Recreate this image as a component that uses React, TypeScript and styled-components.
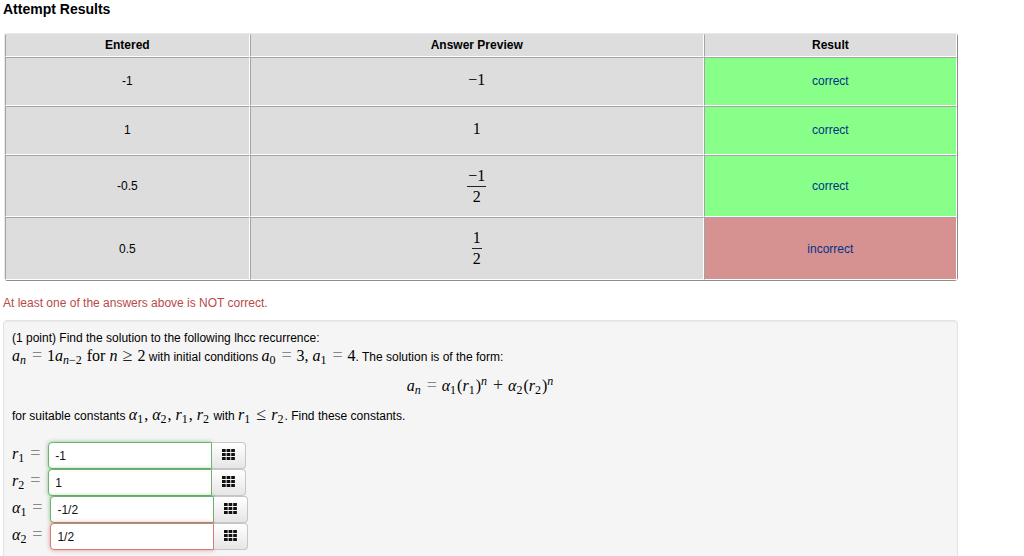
import React from 'react';
import styled, { createGlobalStyle } from 'styled-components';

const GlobalStyle = createGlobalStyle`
  * { box-sizing: border-box; }
  body {
    margin: 0;
    background: #fff;
    color: #000;
    font-family: "Liberation Sans", Arial, sans-serif;
    font-size: 12px;
    line-height: 18px;
  }
`;

const Page = styled.main`
  margin: 0 66px 0 3px;
`;

const Heading = styled.h3`
  margin: 0 0 15px;
  font-size: 14px;
  line-height: 18px;
`;

const ResultsTable = styled.table`
  width: calc(100% - 1px);
  margin-left: 1px;
  table-layout: fixed;
  border: 1px solid;
  border-color: #e8e8e8 #8c8c8c #8c8c8c #e8e8e8;
  border-radius: 4px;
  border-collapse: separate;
  border-spacing: 0;
  background: #ddd;
  text-align: center;
`;

const Col = styled.col<{ $share: number }>`
  width: ${(p) => p.$share}%;
`;

const cellEdges = `
  padding: 0 0 2px;
  border: 1px solid;
  border-color: #a4a4a4 #fff #fff #a4a4a4;
`;

const HeadCell = styled.th`
  ${cellEdges}
  height: 23px;
  border-top-color: #ddd;
  font-size: 12px;
`;

const Cell = styled.td<{ $tall?: boolean }>`
  ${cellEdges}
  height: ${(p) => (p.$tall ? 62 : 49)}px;
  padding-bottom: ${(p) => (p.$tall ? 0 : 2)}px;
  font-size: 12px;
  tr:last-child > & { height: 63px; }
`;

const ResultCell = styled(Cell)<{ $ok: boolean }>`
  background: ${(p) => (p.$ok ? '#8f8' : '#d69191')};
  color: #038;
`;

const Warning = styled.p`
  margin: 13px 0 8px;
  color: #b94a48;
`;

const Problem = styled.section`
  padding: 8px 8px 24px;
  border: 1px solid #e3e3e3;
  border-radius: 4px;
  background: #f5f5f5;
  box-shadow: inset 0 1px 1px rgba(0, 0, 0, 0.05);
`;

const Line = styled.p`
  margin: 0;
`;

const Display = styled.div`
  margin: 11px 0 10px;
  text-align: center;
`;

const MathText = styled.span`
  font-family: "Liberation Serif", "Times New Roman", serif;
  font-size: 16px;
  line-height: 16px;
  white-space: nowrap;
  sub, sup {
    font-size: 12px;
    line-height: 0;
    margin-right: 1px;
  }
  sub { vertical-align: -3px; }
  sup { vertical-align: 6px; }
`;

const Rel = styled.span<{ $dark?: boolean }>`
  display: inline-block;
  width: 12px;
  margin: 0 4px;
  text-align: center;
  font-size: 18px;
  line-height: 16px;
  color: ${(p) => (p.$dark ? '#222' : '#888')};
`;

const Fraction = styled.span`
  display: inline-flex;
  flex-direction: column;
  vertical-align: middle;
  line-height: 20px;
  span + span { border-top: 1px solid #222; }
  span { padding: 0 1px; }
`;

const Answers = styled.form`
  margin-top: 17px;
`;

const AnswerRow = styled.div`
  display: flex;
  align-items: center;
  height: 27px;
`;

const AnswerLabel = styled.label`
  margin: 0 3px 2px 0;
`;

const AnswerInput = styled.input<{ $ok: boolean }>`
  width: 164px;
  height: 27px;
  padding: 0 6px;
  border: 1px solid ${(p) => (p.$ok ? '#6fb172' : '#d9797a')};
  border-radius: 4px 0 0 4px;
  background: #fff;
  box-shadow: 0 0 4px ${(p) => (p.$ok ? 'rgba(70, 160, 70, 0.6)' : 'rgba(210, 80, 80, 0.6)')};
  color: #111;
  font: 12px "Liberation Sans", Arial, sans-serif;
  outline: none;
`;

const KeypadButton = styled.button`
  display: flex;
  align-items: center;
  justify-content: center;
  width: 34px;
  height: 27px;
  padding: 0 0 2px;
  border: 1px solid #c6c6c6;
  border-left: 0;
  border-radius: 0 4px 4px 0;
  background: linear-gradient(#fff, #e6e6e6);
`;

const KeypadIcon = () => (
  <svg width="13" height="11" viewBox="0 0 13 11" fill="#111" aria-hidden="true">
    {[0, 4, 8].map((y) =>
      [0, 4.6, 9.2].map((x) => <rect key={`${x}-${y}`} x={x} y={y} width="3.7" height="3" rx="0.3" />),
    )}
  </svg>
);

const Frac = ({ top, bottom }: { top: string; bottom: string }) => (
  <Fraction>
    <span>{top}</span>
    <span>{bottom}</span>
  </Fraction>
);

const results: { entered: string; preview: React.ReactNode; ok: boolean; tall?: boolean }[] = [
  { entered: '-1', preview: '−1', ok: true },
  { entered: '1', preview: '1', ok: true },
  { entered: '-0.5', preview: <Frac top="−1" bottom="2" />, ok: true, tall: true },
  { entered: '0.5', preview: <Frac top="1" bottom="2" />, ok: false, tall: true },
];

const answers = [
  { id: 'r1', name: 'r', index: 1, value: '-1', ok: true },
  { id: 'r2', name: 'r', index: 2, value: '1', ok: true },
  { id: 'alpha1', name: 'α', index: 1, value: '-1/2', ok: true },
  { id: 'alpha2', name: 'α', index: 2, value: '1/2', ok: false },
];

const Var = ({ name, index }: { name: string; index: React.ReactNode }) => (
  <>
    <i>{name}</i>
    <sub>{index}</sub>
  </>
);

export default function App() {
  return (
    <>
      <GlobalStyle />
      <Page>
        <Heading>Attempt Results</Heading>
        <ResultsTable>
          <colgroup>
            <Col $share={25.7} />
            <Col $share={47.7} />
            <Col $share={26.6} />
          </colgroup>
          <thead>
            <tr>
              <HeadCell scope="col">Entered</HeadCell>
              <HeadCell scope="col">Answer Preview</HeadCell>
              <HeadCell scope="col">Result</HeadCell>
            </tr>
          </thead>
          <tbody>
            {results.map((r) => (
              <tr key={r.entered}>
                <Cell $tall={r.tall}>{r.entered}</Cell>
                <Cell $tall={r.tall}>
                  <MathText>{r.preview}</MathText>
                </Cell>
                <ResultCell $tall={r.tall} $ok={r.ok}>
                  {r.ok ? 'correct' : 'incorrect'}
                </ResultCell>
              </tr>
            ))}
          </tbody>
        </ResultsTable>
        <Warning>At least one of the answers above is NOT correct.</Warning>
        <Problem>
          <Line>(1 point) Find the solution to the following lhcc recurrence:</Line>
          <Line>
            <MathText>
              <Var name="a" index={<i>n</i>} />
              <Rel>=</Rel>1<Var name="a" index={<><i>n</i>−2</>} /> for <i>n</i>
              <Rel $dark>≥</Rel>2
            </MathText>{' '}
            with initial conditions{' '}
            <MathText>
              <Var name="a" index="0" />
              <Rel>=</Rel>3, <Var name="a" index="1" />
              <Rel>=</Rel>4
            </MathText>
            . The solution is of the form:
          </Line>
          <Display>
            <MathText>
              <Var name="a" index={<i>n</i>} />
              <Rel>=</Rel>
              <Var name="α" index="1" />(<Var name="r" index="1" />)<sup><i>n</i></sup>
              <Rel $dark>+</Rel>
              <Var name="α" index="2" />(<Var name="r" index="2" />)<sup><i>n</i></sup>
            </MathText>
          </Display>
          <Line>
            for suitable constants{' '}
            <MathText>
              <Var name="α" index="1" />, <Var name="α" index="2" />, <Var name="r" index="1" />,{' '}
              <Var name="r" index="2" />
            </MathText>{' '}
            with{' '}
            <MathText>
              <Var name="r" index="1" />
              <Rel $dark>≤</Rel>
              <Var name="r" index="2" />
            </MathText>
            . Find these constants.
          </Line>
          <Answers>
            {answers.map((a) => (
              <AnswerRow key={a.id}>
                <AnswerLabel htmlFor={a.id}>
                  <MathText>
                    <Var name={a.name} index={a.index} />
                    <Rel>=</Rel>
                  </MathText>
                </AnswerLabel>
                <AnswerInput id={a.id} type="text" defaultValue={a.value} $ok={a.ok} />
                <KeypadButton type="button" aria-label="Open equation editor">
                  <KeypadIcon />
                </KeypadButton>
              </AnswerRow>
            ))}
          </Answers>
        </Problem>
      </Page>
    </>
  );
}
